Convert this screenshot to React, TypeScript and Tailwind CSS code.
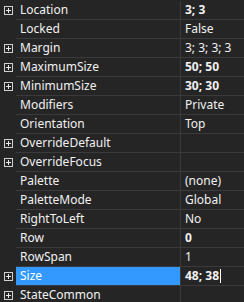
import React from "react";

type Row = { name: string; value: string; plus?: boolean; bold?: boolean; selected?: boolean };

const rows: Row[] = [
  { name: "Location", value: "3; 3", plus: true, bold: true },
  { name: "Locked", value: "False" },
  { name: "Margin", value: "3; 3; 3; 3", plus: true },
  { name: "MaximumSize", value: "50; 50", plus: true, bold: true },
  { name: "MinimumSize", value: "30; 30", plus: true, bold: true },
  { name: "Modifiers", value: "Private" },
  { name: "Orientation", value: "Top" },
  { name: "OverrideDefault", value: "", plus: true },
  { name: "OverrideFocus", value: "", plus: true },
  { name: "Palette", value: "(none)" },
  { name: "PaletteMode", value: "Global" },
  { name: "RightToLeft", value: "No" },
  { name: "Row", value: "0", bold: true },
  { name: "RowSpan", value: "1" },
  { name: "Size", value: "48; 38", plus: true, bold: true, selected: true },
  { name: "StateCommon", value: "", plus: true },
];

function PlusBox() {
  return (
    <svg width="9" height="9" viewBox="0 0 9 9" className="block">
      <rect x="0.5" y="0.5" width="8" height="8" fill="none" stroke="#d0d0d0" strokeWidth="1" />
      <path d="M2 4.5H7M4.5 2V7" stroke="#e8e8e8" strokeWidth="1" />
    </svg>
  );
}

export default function App() {
  return (
    <div
      className="w-[244px] h-[302px] overflow-hidden bg-[#252526] pt-[1px] text-[12px] text-[#f1f1f1]"
      style={{ fontFamily: '"Noto Sans", "Open Sans", sans-serif' }}
    >
      {rows.map((r) => (
        <div key={r.name} className="flex h-[19px]">
          <div className="w-[16px] shrink-0 flex items-center justify-center pl-[1px] pb-[1px]">
            {r.plus ? <PlusBox /> : null}
          </div>
          <div className="flex flex-1 border-b border-[#3a3a3d]">
            <div
              className={`w-[164px] shrink-0 flex items-center pl-[4px] leading-none ${
                r.selected ? "bg-[#3399ff] text-white" : ""
              }`}
            >
              {r.name}
            </div>
            <div className="w-[1px] bg-[#3a3a3d]" />
            <div
              className={`flex flex-1 items-center pl-[4px] leading-none ${r.bold ? "font-bold" : ""}`}
            >
              {r.value}
              {r.selected ? <span className="ml-[1px] inline-block w-[1px] h-[14px] bg-white" /> : null}
            </div>
          </div>
        </div>
      ))}
    </div>
  );
}
